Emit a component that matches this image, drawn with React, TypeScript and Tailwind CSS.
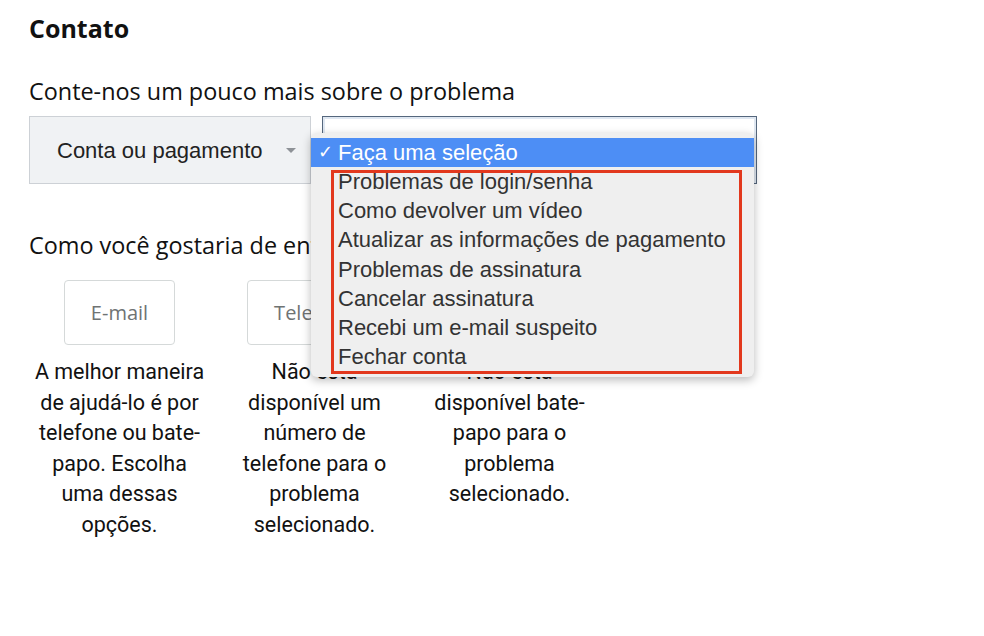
import React from 'react'

const options = [
  'Problemas de login/senha',
  'Como devolver um vídeo',
  'Atualizar as informações de pagamento',
  'Problemas de assinatura',
  'Cancelar assinatura',
  'Recebi um e-mail suspeito',
  'Fechar conta',
]

const channels = [
  {
    label: 'E-mail',
    lines: ['A melhor maneira', 'de ajudá-lo é por', 'telefone ou bate-', 'papo. Escolha', 'uma dessas', 'opções.'],
  },
  {
    label: 'Telefone',
    lines: ['Não está', 'disponível um', 'número de', 'telefone para o', 'problema', 'selecionado.'],
  },
  {
    label: 'Bate-papo',
    lines: ['Não está', 'disponível bate-', 'papo para o', 'problema', 'selecionado.'],
  },
]

const sans = { fontFamily: '"Open Sans", "Noto Sans", sans-serif' }
const system = { fontFamily: '"Liberation Sans", Arial, sans-serif' }

export default function App() {
  return (
    <div className="w-[984px] h-[636px] bg-white overflow-hidden text-[#111]" style={sans}>
      <div className="px-[29px] pt-[13px]">
        <h1 className="text-[25px] font-bold leading-[30px]">Contato</h1>

        <p className="mt-[33px] text-[23.4px] leading-[30px]">Conte-nos um pouco mais sobre o problema</p>

        {/* Selects */}
        <div className="mt-[10px] flex gap-[11px]">
          <div
            className="w-[282px] h-[68px] bg-[#f0f2f4] border border-[#cdd1d6] flex items-center pl-[27px] pr-[14px] text-[22px] text-[#222]"
            style={system}
          >
            <span className="flex-1">Conta ou pagamento</span>
            <span className="w-0 h-0 border-l-[5px] border-r-[5px] border-t-[5px] border-l-transparent border-r-transparent border-t-[#8e9297]" />
          </div>

          <div className="relative z-10 w-[435px] h-[68px] bg-white border border-[#55677d] shadow-[inset_0_0_0_2px_#dfe7f1]">
            {/* Open option list */}
            <div
              className="absolute left-[-12px] top-[16px] w-[443px] h-[244px] bg-[#efefef] rounded-[6px] shadow-[0_3px_10px_rgba(0,0,0,0.28)] pt-[5px] text-[22px]"
              style={system}
            >
              <div className="h-[29px] bg-[#4d8ef5] text-white flex items-center">
                <span className="w-[27px] pl-[7px] text-[18px]">✓</span>
                <span>Faça uma seleção</span>
              </div>
              {options.map(o => (
                <div key={o} className="h-[29.2px] flex items-center pl-[27px] text-[#333]">
                  {o}
                </div>
              ))}
              <div className="absolute left-[20px] top-[37px] right-[12px] bottom-[3px] border-[3px] border-[#e2381d] pointer-events-none" />
            </div>
          </div>
        </div>

        <p className="mt-[46px] text-[23.4px] leading-[30px]">Como você gostaria de entrar em contato?</p>

        {/* Channels */}
        <div className="-ml-[7px] flex">
          {channels.map(c => (
            <div key={c.label} className="w-[195px] flex flex-col items-center">
              <div className="mt-[20px] h-[65px] px-[26px] border border-[#d5d9d9] rounded-[4px] flex items-center text-[20px] text-[#6f7373]">
                {c.label}
              </div>
              <div className="mt-[12px] text-center text-[21.5px] leading-[30.5px]" style={{ fontFamily: 'Roboto, "Noto Sans", sans-serif' }}>
                {c.lines.map(l => (
                  <div key={l}>{l}</div>
                ))}
              </div>
            </div>
          ))}
        </div>
      </div>
    </div>
  )
}
